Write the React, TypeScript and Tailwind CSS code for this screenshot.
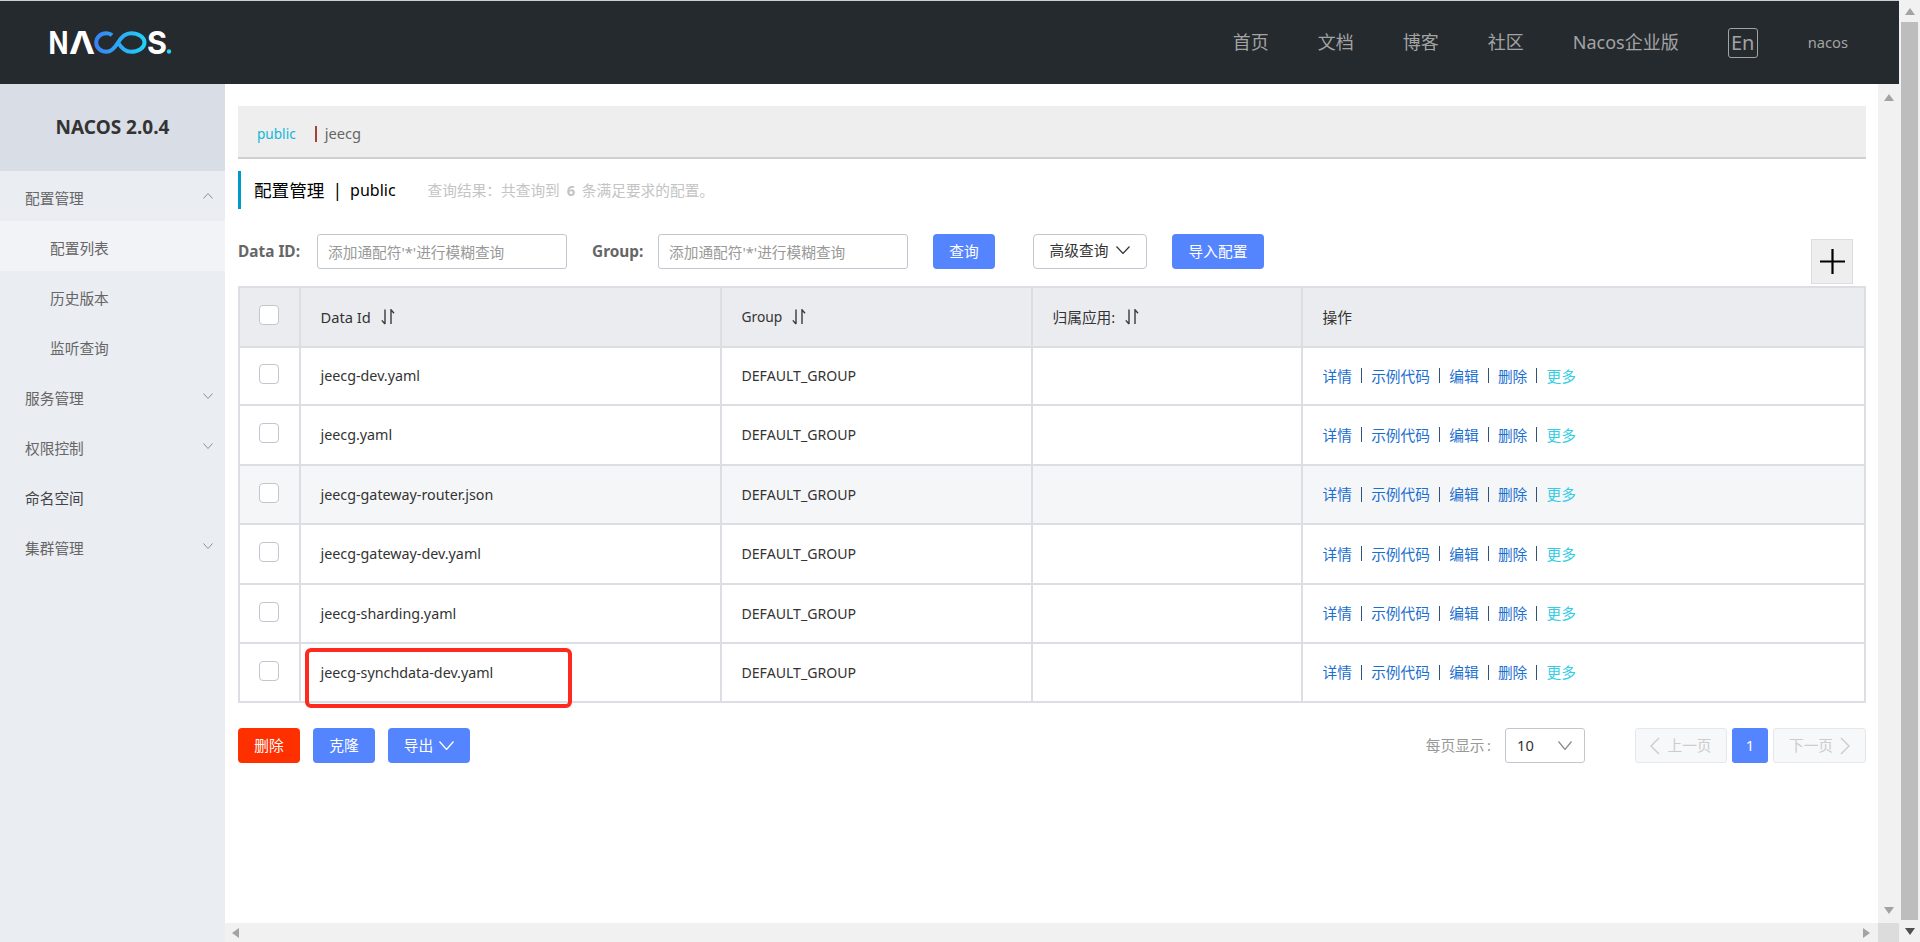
import React from "react";

const rows = [
  { name: "jeecg-dev.yaml", h: "h-[58px]" },
  { name: "jeecg.yaml", h: "h-[60px]" },
  { name: "jeecg-gateway-router.json", h: "h-[59px]" },
  { name: "jeecg-gateway-dev.yaml", h: "h-[60px]" },
  { name: "jeecg-sharding.yaml", h: "h-[59px]" },
  { name: "jeecg-synchdata-dev.yaml", h: "h-[59px]" },
];

function Chevron({ up = false, w = 10, h = 6, color = "#8a8f99", sw = 1 }: { up?: boolean; w?: number; h?: number; color?: string; sw?: number }) {
  return (
    <svg width={w} height={h} viewBox={`0 0 ${w} ${h}`} fill="none" className="shrink-0">
      <polyline
        points={up ? `0.5,${h - 0.5} ${w / 2},0.5 ${w - 0.5},${h - 0.5}` : `0.5,0.5 ${w / 2},${h - 0.5} ${w - 0.5},0.5`}
        stroke={color}
        strokeWidth={sw}
      />
    </svg>
  );
}

function Side({ dir, color = "#ccc" }: { dir: "l" | "r"; color?: string }) {
  return (
    <svg width="10" height="18" viewBox="0 0 10 18" fill="none" className="shrink-0">
      <polyline points={dir === "l" ? "9,1 1,9 9,17" : "1,1 9,9 1,17"} stroke={color} strokeWidth="1.4" />
    </svg>
  );
}

function Sort() {
  return (
    <svg width="14" height="16" viewBox="0 0 14 16" fill="none" className="shrink-0">
      <path d="M4 0.5V15M0.8 11.4L4 15M13 4.2L10 0.8V15" stroke="#3a3a3a" strokeWidth="1.4" />
    </svg>
  );
}

function Check() {
  return <div className="block w-5 h-5 mx-auto mb-1 bg-white border border-[#c4c6cf] rounded-[4px]" />;
}

function Arrow({ dir, color = "#a3a3a3" }: { dir: "u" | "d" | "l" | "r"; color?: string }) {
  const p = { u: "0,7 5,0 10,7", d: "0,0 5,7 10,0", l: "7,0 0,5 7,10", r: "0,0 7,5 0,10" }[dir];
  const w = dir === "u" || dir === "d" ? 10 : 7;
  const h = dir === "u" || dir === "d" ? 7 : 10;
  return (
    <svg width={w} height={h} viewBox={`0 0 ${w} ${h}`} className="shrink-0">
      <polygon points={p} fill={color} />
    </svg>
  );
}

function Logo() {
  return (
    <svg width="130" height="44" viewBox="-4 -10 130 44" fill="none" role="img" aria-label="NACOS.">
      <defs>
        <linearGradient id="inf" x1="44" y1="0" x2="98" y2="0" gradientUnits="userSpaceOnUse">
          <stop offset="0" stopColor="#3a7ff2" />
          <stop offset="1" stopColor="#1fd6fa" />
        </linearGradient>
      </defs>
      <g fill="#fff" fontFamily="Inter, sans-serif" fontWeight="700" fontSize="31">
        <text x="-1.5" y="22.6" textLength="20" lengthAdjust="spacingAndGlyphs">N</text>
        <text x="19" y="22.6" textLength="26" lengthAdjust="spacingAndGlyphs">Λ</text>
        <text x="97" y="22.6" textLength="20" lengthAdjust="spacingAndGlyphs">S</text>
      </g>
      <path
        d="M62 4.2C60.5 2.8 58.5 2.2 56.5 2.2C50.5 2.2 46.2 6.4 46.2 11.5C46.2 16.6 50.5 20.8 56.5 20.8C61.5 20.8 65 16.5 68 11.5C71 6.5 75 2.2 81 2.2C88.5 2.2 94.5 6.4 94.5 11.5C94.5 16.6 88.5 20.8 81 20.8C75 20.8 71 16.5 68 11.5"
        stroke="url(#inf)"
        strokeWidth="4"
      />
      <circle cx="119" cy="20.5" r="2.2" fill="#1fd6fa" />
    </svg>
  );
}

function MenuItem({ label, open, closed, active, sub, dark }: { label: string; open?: boolean; closed?: boolean; active?: boolean; sub?: boolean; dark?: boolean }) {
  return (
    <div className={`h-[50px] flex items-center justify-between ${sub ? "pl-[50px]" : "pl-[25px]"} pr-[12px] ${active ? "bg-[#f2f3f7]" : ""} ${dark ? "text-[#444]" : "text-[#666]"}`}>
      <span className="pt-[4px]">{label}</span>
      {open && <Chevron up />}
      {closed && <Chevron />}
    </div>
  );
}

export default function App() {
  return (
    <div className="flex w-[1920px] h-[942px] overflow-hidden bg-white text-[14.7px] text-[#333] font-['Noto_Sans','Noto_Sans_CJK_SC',sans-serif]">
      <div className="flex flex-col w-[1899px] shrink-0">
        <header className="h-[84px] shrink-0 flex items-center justify-between bg-[#252a2f] border-t border-[#cfcfcf] pl-[46px] pr-[51px]">
          <Logo />
          <nav className="flex items-center text-[18px] text-[#a3a3a3]">
            <span className="mr-[49px]">首页</span>
            <span className="mr-[49px]">文档</span>
            <span className="mr-[49px]">博客</span>
            <span className="mr-[49px]">社区</span>
            <span className="mr-[49px]">Nacos企业版</span>
            <span className="w-[30px] h-[30px] flex items-center justify-center border border-[#a3a3a3] rounded-[3px] mr-[50px] text-[20px]">En</span>
            <span className="text-[14.7px]">nacos</span>
          </nav>
        </header>

        <div className="flex flex-1 min-h-0">
          <aside className="w-[225px] shrink-0 bg-[#eaedf2]">
            <div className="h-[87px] flex items-center justify-center bg-[#d9dde5] text-[19px] font-bold text-[#333]">NACOS 2.0.4</div>
            <MenuItem label="配置管理" open />
            <MenuItem label="配置列表" sub active />
            <MenuItem label="历史版本" sub />
            <MenuItem label="监听查询" sub />
            <MenuItem label="服务管理" closed />
            <MenuItem label="权限控制" closed />
            <MenuItem label="命名空间" dark />
            <MenuItem label="集群管理" closed />
          </aside>

          <div className="flex flex-col flex-1 min-w-0">
            <div className="flex flex-1 min-h-0">
              <main className="flex-1 min-w-0 pl-[13px] pr-[12px] pt-[22px]">
                <div className="h-[53px] bg-[#eeeeee] border-b-2 border-[#cfcfcf] flex items-center pl-[19px] pt-[4px]">
                  <span className="text-[13.6px] text-[#0fb7d8] pt-[1px]">public</span>
                  <span className="ml-[19px] mr-[8px] w-[2px] h-[16px] bg-[#a0443a]" />
                  <span className="text-[#666]">jeecg</span>
                </div>

                <div className="mt-[12px] h-[38px] flex items-center border-l-[3px] border-[#0099cc] pl-[13px]">
                  <span className="text-[17.6px] text-black">配置管理</span>
                  <span className="text-[17.6px] text-black mx-[8px]">|</span>
                  <span className="text-[16px] text-black">public</span>
                  <span className="ml-[32px] text-[#c4c4c4]">
                    {"查询结果\uFF1A共查询到 "}<b className="font-bold mx-[3px]">6</b> 条满足要求的配置。
                  </span>
                </div>

                <div className="relative mt-[25px] h-[35px] flex items-center">
                  <label className="text-[15.4px] font-bold text-[#666] w-[79px]">Data ID:</label>
                  <input
                    placeholder="添加通配符'*'进行模糊查询"
                    className="w-[250px] h-[35px] px-[10px] border border-[#c4c6cf] rounded-[3px] outline-none placeholder:text-[#999]"
                  />
                  <label className="text-[15.4px] font-bold text-[#666] ml-[25px] w-[66px]">Group:</label>
                  <input
                    placeholder="添加通配符'*'进行模糊查询"
                    className="w-[250px] h-[35px] px-[10px] border border-[#c4c6cf] rounded-[3px] outline-none placeholder:text-[#999]"
                  />
                  <button className="ml-[25px] w-[62px] h-[35px] pb-[1px] bg-[#5584ff] text-white rounded-[4px]">查询</button>
                  <button className="ml-[38px] w-[114px] h-[35px] pb-[3px] border border-[#c4c6cf] rounded-[4px] flex items-center justify-center gap-[8px]">
                    高级查询
                    <Chevron w={14} h={8} color="#333" sw={1.2} />
                  </button>
                  <button className="ml-[25px] w-[92px] h-[35px] pb-[1px] bg-[#5584ff] text-white rounded-[4px]">导入配置</button>
                  <div className="absolute left-[1573px] top-[5px] w-[42px] h-[45px] bg-[#eeeeee] border border-[#dddddd] flex items-center justify-center">
                    <svg width="25" height="25" viewBox="0 0 25 25">
                      <path d="M12.5 0V25M0 12.5H25" stroke="#000" strokeWidth="2.2" />
                    </svg>
                  </div>
                </div>

                <div className="relative mt-[17px]">
                  <table className="w-full table-fixed border-collapse">
                    <colgroup>
                      <col className="w-[60.5px]" />
                      <col className="w-[421px]" />
                      <col className="w-[311px]" />
                      <col className="w-[270px]" />
                      <col />
                    </colgroup>
                    <thead>
                      <tr className="h-[60px] bg-[#ebecf0]">
                        <th className="border-2 border-[#dcdee3] font-normal"><Check /></th>
                        <th className="border-2 border-[#dcdee3] font-normal text-left pl-[20px]">
                          <span className="flex items-center gap-[10px]">Data Id<Sort /></span>
                        </th>
                        <th className="border-2 border-[#dcdee3] font-normal text-left pl-[20px]">
                          <span className="flex items-center gap-[10px] text-[13.8px]">Group<Sort /></span>
                        </th>
                        <th className="border-2 border-[#dcdee3] font-normal text-left pl-[20px]">
                          <span className="flex items-center gap-[10px]">归属应用:<Sort /></span>
                        </th>
                        <th className="border-2 border-[#dcdee3] font-normal text-left pl-[20px]">操作</th>
                      </tr>
                    </thead>
                    <tbody>
                      {rows.map((r, i) => (
                        <tr key={r.name} className={`${r.h} ${i === 2 ? "bg-[#f5f6f8]" : ""}`}>
                          <td className="border-2 border-[#dcdee3]"><Check /></td>
                          <td className="border-2 border-[#dcdee3] pl-[20px] text-[14.3px]">{r.name}</td>
                          <td className="border-2 border-[#dcdee3] pl-[20px] text-[14.1px]">DEFAULT_GROUP</td>
                          <td className="border-2 border-[#dcdee3]" />
                          <td className="border-2 border-[#dcdee3] pl-[20px]">
                            <span className="flex items-center text-[#1b6fd1]">
                              <span>详情</span>
                              <span className="mx-[9.15px] w-px h-[15px] bg-[#33517f]" />
                              <span>示例代码</span>
                              <span className="mx-[9.15px] w-px h-[15px] bg-[#33517f]" />
                              <span>编辑</span>
                              <span className="mx-[9.15px] w-px h-[15px] bg-[#33517f]" />
                              <span>删除</span>
                              <span className="mx-[9.15px] w-px h-[15px] bg-[#33517f]" />
                              <span className="text-[#33cde5]">更多</span>
                            </span>
                          </td>
                        </tr>
                      ))}
                    </tbody>
                  </table>
                  <div className="absolute left-[66.5px] top-[362px] w-[267px] h-[60px] border-4 border-[#ff2a1f] rounded-[6px]" />
                </div>

                <div className="mt-[25px] h-[35px] flex items-center">
                  <button className="w-[62px] h-[35px] bg-[#ff3000] text-white rounded-[4px]">删除</button>
                  <button className="ml-[13px] w-[62px] h-[35px] bg-[#5584ff] text-white rounded-[4px]">克隆</button>
                  <button className="ml-[13px] w-[82px] h-[35px] bg-[#5584ff] text-white rounded-[4px] flex items-center justify-center gap-[6px]">
                    导出
                    <Chevron w={15} h={9} color="#fff" sw={1.3} />
                  </button>
                  <span className="ml-auto text-[#999] flex">每页显示<span className="ml-[2.5px]">:</span></span>
                  <div className="ml-[14px] w-[80px] h-[35px] border border-[#c4c6cf] rounded-[3px] flex items-center justify-between pl-[11px] pr-[12px]">
                    <span>10</span>
                    <Chevron w={14} h={9} color="#888" sw={1.2} />
                  </div>
                  <div className="ml-[50px] w-[92px] h-[35px] bg-[#f7f8fa] border border-[#e6e7eb] rounded-[3px] flex items-center justify-center gap-[7px] text-[#ccc]">
                    <Side dir="l" />
                    上一页
                  </div>
                  <div className="ml-[5px] w-[36px] h-[35px] bg-[#5584ff] text-white rounded-[3px] flex items-center justify-center">1</div>
                  <div className="ml-[5px] w-[93px] h-[35px] bg-[#f7f8fa] border border-[#e6e7eb] rounded-[3px] flex items-center justify-center gap-[7px] text-[#ccc]">
                    下一页
                    <Side dir="r" />
                  </div>
                </div>
              </main>

              <div className="w-[21px] shrink-0 bg-[#f1f1f1] flex flex-col items-center justify-between pt-[10px] pb-[9px]">
                <Arrow dir="u" />
                <Arrow dir="d" />
              </div>
            </div>

            <div className="h-[19px] shrink-0 flex">
              <div className="flex-1 bg-[#f1f1f1] flex items-center justify-between pl-[7px] pr-[8px]">
                <Arrow dir="l" />
                <Arrow dir="r" />
              </div>
              <div className="w-[21px] bg-[#dcdcdc]" />
            </div>
          </div>
        </div>
      </div>

      <div className="w-[21px] shrink-0 bg-[#f1f1f1] flex flex-col items-center">
        <div className="h-[22px] flex items-center justify-center w-full"><Arrow dir="u" /></div>
        <div className="flex-1 w-[17px] bg-[#bdbdbd]" />
        <div className="h-[22px] flex items-center justify-center w-full"><Arrow dir="d" color="#505050" /></div>
      </div>
    </div>
  );
}
